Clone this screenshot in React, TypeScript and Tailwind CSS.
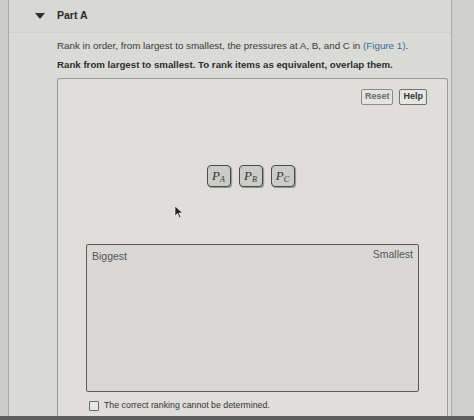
import React from "react";

const font = { fontFamily: '"Liberation Sans", Arial, sans-serif' };

// italic serif label with subscript, e.g. P with subscript A
function Tile({ sub }: { sub: string }) {
  return (
    <div className="w-[24px] h-[22px] rounded-[4px] border-[1.5px] border-[#4a4a4a] bg-[#cbcbc8] shadow-[1px_1px_1px_rgba(0,0,0,0.35)] flex items-center justify-center">
      <span className="italic text-[13px] text-[#333] leading-none" style={{ fontFamily: '"Liberation Serif", serif' }}>
        P<span className="text-[8px] align-[-2px]">{sub}</span>
      </span>
    </div>
  );
}

export default function App() {
  return (
    <div className="w-[474px] h-[420px] overflow-hidden bg-[#d3d3d0] flex flex-col" style={font}>
      <div className="flex flex-1 min-h-0">
        <div className="w-[9px] border-r border-[#a9a9a6] bg-[#cbcbc8]" />
        <div className="flex-1 flex flex-col bg-[#dadad6] min-h-0">
          <div className="h-[33px] flex items-center border-b border-[#d0d0cc] bg-[#d8d8d4]">
            <svg width="10" height="6" viewBox="0 0 10 6" className="ml-[26px]">
              <path d="M0 0 L10 0 L5 6 Z" fill="#333" />
            </svg>
            <span className="ml-[12px] font-bold text-[10.5px] text-[#2a2a2a]">Part A</span>
          </div>
          <div className="pl-[48px] pr-[3px] flex flex-col flex-1 min-h-0">
            <p className="mt-[7px] text-[9.8px] text-[#3a3a3a] leading-[12px]">
              Rank in order, from largest to smallest, the pressures at A, B, and C in{" "}
              <span className="text-[#3d6a9c]">(Figure 1)</span>.
            </p>
            <p className="mt-[7px] font-bold text-[9.7px] text-[#2e2e2e] leading-[12px]">
              Rank from largest to smallest. To rank items as equivalent, overlap them.
            </p>
            <div className="mt-[7px] flex-1 border border-b-0 border-[#9a9a97] rounded-t-[3px] bg-[#dfdedb] flex flex-col">
              <div className="flex justify-end gap-[6px] pt-[10px] pr-[20px]">
                <button className="h-[16px] px-[3px] border border-[#8c8c89] rounded-[2px] bg-[#e3e3e0] text-[9px] font-bold text-[#6a6a6a]">
                  Reset
                </button>
                <button className="h-[16px] px-[3px] border border-[#707070] rounded-[2px] bg-[#e6e6e3] text-[9px] font-bold text-[#333]">
                  Help
                </button>
              </div>
              <div className="flex justify-center gap-[8px] mt-[60px] pr-[4px]">
                <Tile sub="A" />
                <Tile sub="B" />
                <Tile sub="C" />
              </div>
              <div className="flex-1 flex flex-col px-[28px] mt-[20px]">
                <div className="relative h-[37px]">
                  {/* mouse pointer */}
                  <svg width="10" height="14" viewBox="0 0 10 14" className="absolute left-[88px] top-[-2px]">
                    <path d="M1 1 L1 11 L3.5 8.5 L5.5 13 L7 12.3 L5 8 L8.5 8 Z" fill="#222" stroke="#fff" strokeWidth="0.6" />
                  </svg>
                </div>
                <div className="h-[148px] border-[1.5px] border-[#5a5a58] rounded-[2px] bg-[#d9d8d4] flex justify-between px-[5px] pt-[2px]">
                  <span className="text-[10.5px] text-[#555] leading-[14px] mt-[2px]">Biggest</span>
                  <span className="text-[10.5px] text-[#555] leading-[14px]">Smallest</span>
                </div>
                <div className="flex items-center mt-[7px]">
                  <div className="w-[10px] h-[10px] border border-[#6a6a68] rounded-[1px] bg-[#e6e6e3] ml-[3px]" />
                  <span className="ml-[5px] text-[8.8px] text-[#333]">The correct ranking cannot be determined.</span>
                </div>
              </div>
            </div>
          </div>
        </div>
        <div className="w-[23px] border-l border-[#a9a9a6] bg-[#cfcfcc]" />
      </div>
      <div className="h-[4px] bg-[#5e5e5e]" />
    </div>
  );
}
